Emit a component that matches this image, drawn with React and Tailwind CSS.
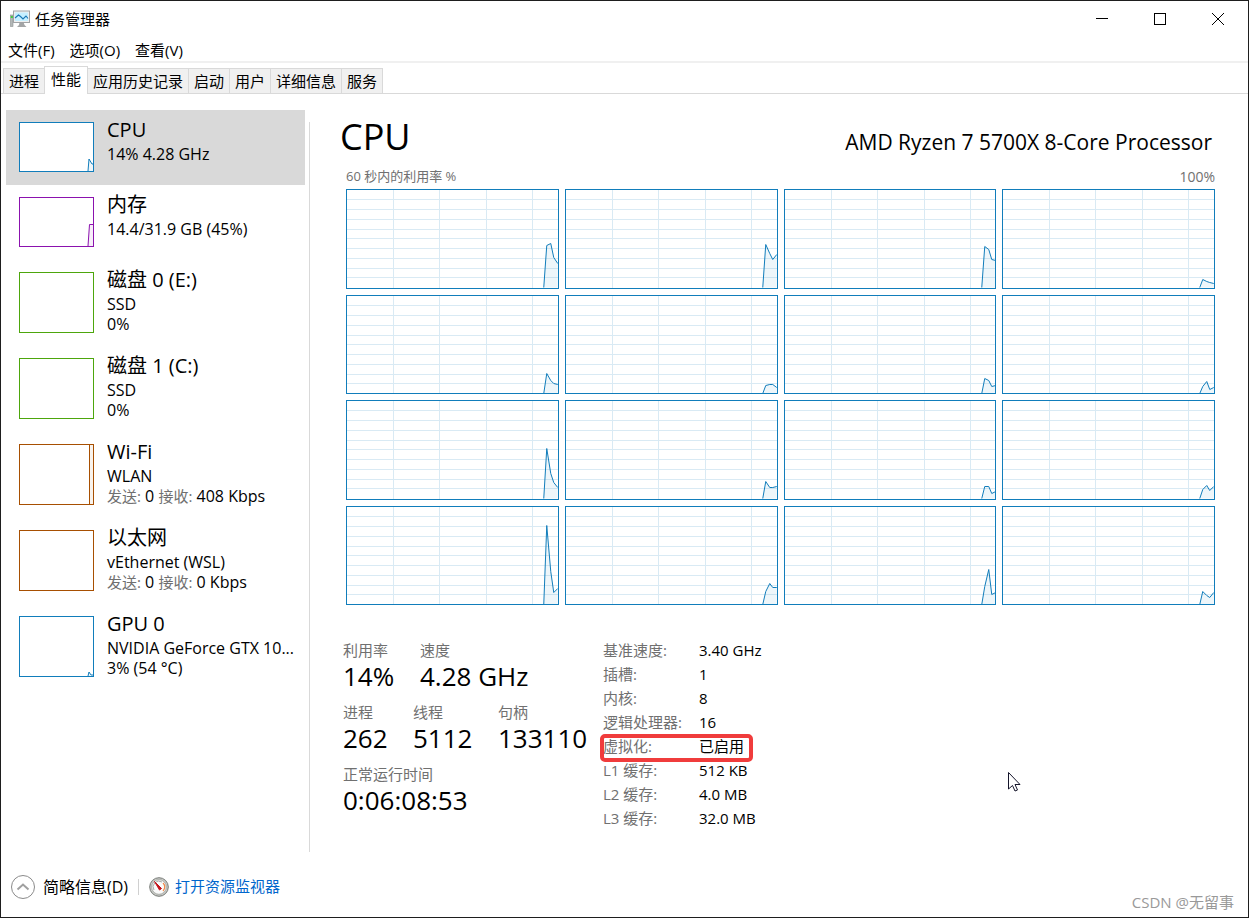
import React, { useState } from "react";
import clsx from "clsx";

const TABS = ["进程", "性能", "应用历史记录", "启动", "用户", "详细信息", "服务"];
const MENUS = ["文件(F)", "选项(O)", "查看(V)"];

// trace points are measured from the bottom right corner of a graph
const DEVICES = [
  { key: "cpu", name: "CPU", lines: ["14% 4.28 GHz"], color: "#117dbb", trace: "-5,0 -4,-12 -1,-7 0,-7", short: true },
  { key: "memory", name: "内存", lines: ["14.4/31.9 GB (45%)"], color: "#8b12ae", trace: "-5,0 -3.5,-21.5 0,-21.5", short: true },
  { key: "disk0", name: "磁盘 0 (E:)", lines: ["SSD", "0%"], color: "#4da60c" },
  { key: "disk1", name: "磁盘 1 (C:)", lines: ["SSD", "0%"], color: "#4da60c" },
  { key: "wifi", name: "Wi-Fi", lines: ["WLAN"], send: "0", receive: "408 Kbps", color: "#a74f01", trace: "-3.5,0 -3.5,-60 0,-60" },
  { key: "ethernet", name: "以太网", lines: ["vEthernet (WSL)"], send: "0", receive: "0 Kbps", color: "#a74f01" },
  { key: "gpu", name: "GPU 0", lines: ["NVIDIA GeForce GTX 10...", "3% (54 °C)"], color: "#117dbb", trace: "-5,0 -4,-4 -2,-1 0,-1" },
];

const CORES = [
  "-14,0 -11,-42 -7,-44 -4,-30 0,-24",
  "-14,0 -11,-43 -7,-34 -4,-28 0,-33",
  "-14,0 -11,-41 -7,-38 -4,-28 0,-27",
  "-14,0 -11,-8 -7,-6 -4,-5 0,-4",
  "-14,0 -11,-20 -7,-13 -4,-10 0,-9",
  "-14,0 -11,-8 -7,-9 -4,-9 0,-6",
  "-14,0 -11,-15 -7,-13 -4,-7 0,-8",
  "-14,0 -11,-7 -7,-12 -4,-4 0,-6",
  "-14,0 -11,-50 -7,-25 -4,-16 0,-11",
  "-14,0 -11,-17 -7,-11 -4,-11 0,-12",
  "-14,0 -11,-12 -7,-12 -4,-5 0,-7",
  "-14,0 -11,-9 -7,-13 -4,-8 0,-12",
  "-14,0 -11,-79 -7,-33 -4,-12 0,-16",
  "-14,0 -11,-13 -7,-21 -4,-17 0,-17",
  "-14,0 -11,-18 -7,-35 -4,-10 0,-12",
  "-14,0 -11,-13 -7,-9 -4,-7 0,-12",
];

const SPECS = [
  { label: "基准速度:", value: "3.40 GHz" },
  { label: "插槽:", value: "1" },
  { label: "内核:", value: "8" },
  { label: "逻辑处理器:", value: "16" },
  { label: "虚拟化:", value: "已启用", marked: true },
  { label: "L1 缓存:", value: "512 KB" },
  { label: "L2 缓存:", value: "4.0 MB" },
  { label: "L3 缓存:", value: "32.0 MB" },
];

function Trace({ points, color }) {
  return (
    <svg x="100%" y="100%" overflow="visible">
      <polygon points={`${points} 0,0`} fill={color} fillOpacity="0.07" />
      <polyline points={points} fill="none" stroke={color} strokeWidth="1" />
    </svg>
  );
}

function CoreGraph({ points }) {
  return (
    <div className="border border-[#117dbb] bg-white">
      <svg className="block h-full w-full" aria-hidden="true">
        <g stroke="#d9eaf4" shapeRendering="crispEdges">
          {[10, 20, 30, 40, 50, 60, 70, 80, 90].map((y) => (
            <line key={y} x1="0" x2="100%" y1={`${y}%`} y2={`${y}%`} />
          ))}
          {[22, 44, 66, 88].map((x) => (
            <line key={x} y1="0" y2="100%" x1={`${x}%`} x2={`${x}%`} />
          ))}
        </g>
        <Trace points={points} color="#117dbb" />
      </svg>
    </div>
  );
}

function AppIcon() {
  return (
    <svg width="20" height="18" viewBox="0 0 20 18" aria-hidden="true">
      <rect x="0.5" y="5" width="2.5" height="11.5" fill="#b4b8b8" stroke="#8b8f8f" strokeWidth="0.6" />
      <rect x="0.8" y="6" width="2" height="2" fill="#3fce3a" />
      <path d="M9.500 12h4l1 3 2 2H7l2-2z" fill="#a3a5a6" />
      <rect x="3.5" y="1" width="16" height="11.5" fill="#eee" stroke="#a0a3a5" />
      <rect x="5" y="2.5" width="13" height="8.5" fill="#c5efff" />
      <path d="m5 8 3.500-3 2 1.500L13 9l3-3 2 2.500" fill="none" stroke="#1877b5" strokeWidth="1.1" />
    </svg>
  );
}

function GaugeIcon() {
  return (
    <svg width="20" height="20" viewBox="0 0 20 20" aria-hidden="true">
      <circle cx="10" cy="10" r="9.300" fill="#c7c9c5" stroke="#777a76" strokeWidth="1" />
      <circle cx="10" cy="10" r="7.300" fill="#fafafa" stroke="#999c97" strokeWidth="0.7" />
      <path d="M5 13a5.800 5.800 0 0 1 8-8" fill="none" stroke="#a9aca8" strokeWidth="1" />
      <path d="M14 6a5.500 5.500 0 0 1 0 8" fill="none" stroke="#f08a4b" strokeWidth="1.300" />
      <path d="M5.500 4.500 12.500 11.500l-2 1.500z" fill="#c4121a" stroke="#c4121a" strokeWidth="1" />
    </svg>
  );
}

function DeviceItem({ device, selected, onSelect }) {
  return (
    <button
      type="button"
      onClick={onSelect}
      className={clsx("flex w-full gap-[13px] pl-[13px] text-left", device.short ? "h-[75px]" : "h-[86px]", selected && "bg-[#d9d9d9]")}
    >
      <span
        className={clsx("mt-3 w-[75px] shrink-0 border bg-white", device.short ? "h-[50px]" : "h-[61px]")}
        style={{ borderColor: device.color }}
      >
        <svg className="block h-full w-full" aria-hidden="true">
          {device.trace && <Trace points={device.trace} color={device.color} />}
        </svg>
      </span>
      <span className="min-w-0 flex-1 pt-2 text-[16px]">
        <span className="mb-0.5 block text-[20px] leading-6">{device.name}</span>
        {device.lines.map((line) => (
          <span key={line} className="block whitespace-nowrap leading-5">{line}</span>
        ))}
        {device.send && (
          <span className="block whitespace-nowrap leading-5">
            <span className="text-[15px] text-[#707070]">发送:</span> {device.send}{" "}
            <span className="text-[15px] text-[#707070]">接收:</span> {device.receive}
          </span>
        )}
      </span>
    </button>
  );
}

function Stat({ label, value, className }) {
  return (
    <div className={className}>
      <dt className="leading-5 text-[#707070]">{label}</dt>
      <dd className="text-[26px] leading-8">{value}</dd>
    </div>
  );
}

export default function App() {
  const [tab, setTab] = useState("性能");
  const [selected, setSelected] = useState("cpu");

  return (
    <div className="relative flex min-h-screen flex-col border border-[#1e1e1e] bg-white font-['Open_Sans','Noto_Sans_CJK_SC',sans-serif] text-[15px] text-black">
      <header className="flex h-9 items-center pr-px pl-[9px]">
        <AppIcon />
        <h1 className="ml-[5px] flex-1">任务管理器</h1>
        <button type="button" aria-label="最小化" className="flex h-full w-[58px] items-center justify-center">
          <svg width="12" height="12" viewBox="0 0 12 12"><path d="M0 5.500h12" stroke="#000" /></svg>
        </button>
        <button type="button" aria-label="最大化" className="flex h-full w-[58px] items-center justify-center">
          <svg width="12" height="12" viewBox="0 0 12 12"><rect x="0.5" y="0.5" width="11" height="11" fill="none" stroke="#000" /></svg>
        </button>
        <button type="button" aria-label="关闭" className="flex h-full w-[58px] items-center justify-center">
          <svg width="12" height="12" viewBox="0 0 12 12"><path d="m0 0 12 12M12 0 0 12" stroke="#000" /></svg>
        </button>
      </header>

      <nav className="flex h-[26px] items-end gap-[15px] border-b-2 border-[#f0f0f0] pl-[7px]">
        {MENUS.map((menu) => (
          <button key={menu} type="button" className="leading-[22px]">{menu}</button>
        ))}
      </nav>

      <div role="tablist" className="flex h-[31px] items-end border-b border-[#d9d9d9] pl-0.5">
        {TABS.map((name) => (
          <button
            key={name}
            type="button"
            role="tab"
            aria-selected={tab === name}
            onClick={() => setTab(name)}
            className={clsx(
              "border-[#d9d9d9] leading-6",
              tab === name ? "-mb-px -ml-px h-7 border-x border-t bg-white px-[6px] pb-1" : "h-[25px] border-r border-t bg-[#f0f0f0] px-[5px] first:border-l"
            )}
          >
            {name}
          </button>
        ))}
      </div>

      <main className="flex flex-1 pt-4">
        <aside className="w-[304px] shrink-0 pl-[5px]">
          {DEVICES.map((device) => (
            <DeviceItem
              key={device.key}
              device={device}
              selected={selected === device.key}
              onSelect={() => setSelected(device.key)}
            />
          ))}
        </aside>
        <div className="mt-3 ml-1 w-px shrink-0 bg-[#d9d9d9]" />

        <section className="min-w-0 flex-1 pr-[33px] pl-[30px]">
          <div className="flex h-[54px] items-baseline justify-between pr-[3px]">
            <h2 className="text-[36px] leading-[54px]">CPU</h2>
            <p className="text-[21px] leading-8">AMD Ryzen 7 5700X 8-Core Processor</p>
          </div>
          <div className="flex h-[25px] items-center justify-between pl-[6px] text-[#707070]">
            <span className="text-[13px]">60 秒内的利用率 %</span>
            <span className="text-[14px]">100%</span>
          </div>
          <div className="ml-[6px] grid h-[416px] grid-cols-4 grid-rows-4 gap-1.5">
            {CORES.map((points, i) => (
              <CoreGraph key={i} points={points} />
            ))}
          </div>

          <div className="flex pt-[35px] pl-[3px]">
            <div className="flex w-[260px] flex-col gap-2.5">
              <dl className="flex">
                <Stat label="利用率" value="14%" className="w-[77px]" />
                <Stat label="速度" value="4.28 GHz" />
              </dl>
              <dl className="flex">
                <Stat label="进程" value="262" className="w-[70px]" />
                <Stat label="线程" value="5112" className="w-[85px]" />
                <Stat label="句柄" value="133110" />
              </dl>
              <dl>
                <Stat label="正常运行时间" value="0:06:08:53" />
              </dl>
            </div>
            <dl className="-mt-0.5">
              {SPECS.map((spec) => (
                <div key={spec.label} className="relative flex leading-6">
                  <dt className="w-24 text-[#707070]">{spec.label}</dt>
                  <dd>{spec.value}</dd>
                  {spec.marked && (
                    <span className="absolute top-0 -left-[3px] h-7 w-[153px] rounded-[5px] border-4 border-[#f03c3c]" />
                  )}
                </div>
              ))}
            </dl>
          </div>
        </section>
      </main>

      <footer className="flex h-[65px] items-center pt-1 pl-[10px]">
        <button type="button" className="flex items-center gap-2 text-[16px]">
          <svg width="24" height="24" viewBox="0 0 24 24" aria-hidden="true">
            <circle cx="12" cy="12" r="11.500" fill="#fff" stroke="#8a8a8a" />
            <path d="m6.500 14.500 5.500-5 5.500 5" fill="none" stroke="#a0a0a0" strokeWidth="2" />
          </svg>
          简略信息(D)
        </button>
        <span className="mx-[10px] h-4 w-px bg-[#d0d0d0]" />
        <a href="#resmon" className="flex items-center gap-[6px] text-[#0066cc]">
          <GaugeIcon />
          打开资源监视器
        </a>
      </footer>

      <span className="absolute right-[14px] bottom-[3px] leading-6 text-[#999]">CSDN @无留事</span>

      <svg className="absolute top-[771px] left-[1007px]" width="13" height="20" viewBox="0 0 13 20" aria-hidden="true">
        <path d="M.5.5v16.500l4-3.500 2.500 5.500 2.500-1-2.500-5.500h5z" fill="#fff" stroke="#14142a" />
      </svg>
    </div>
  );
}
